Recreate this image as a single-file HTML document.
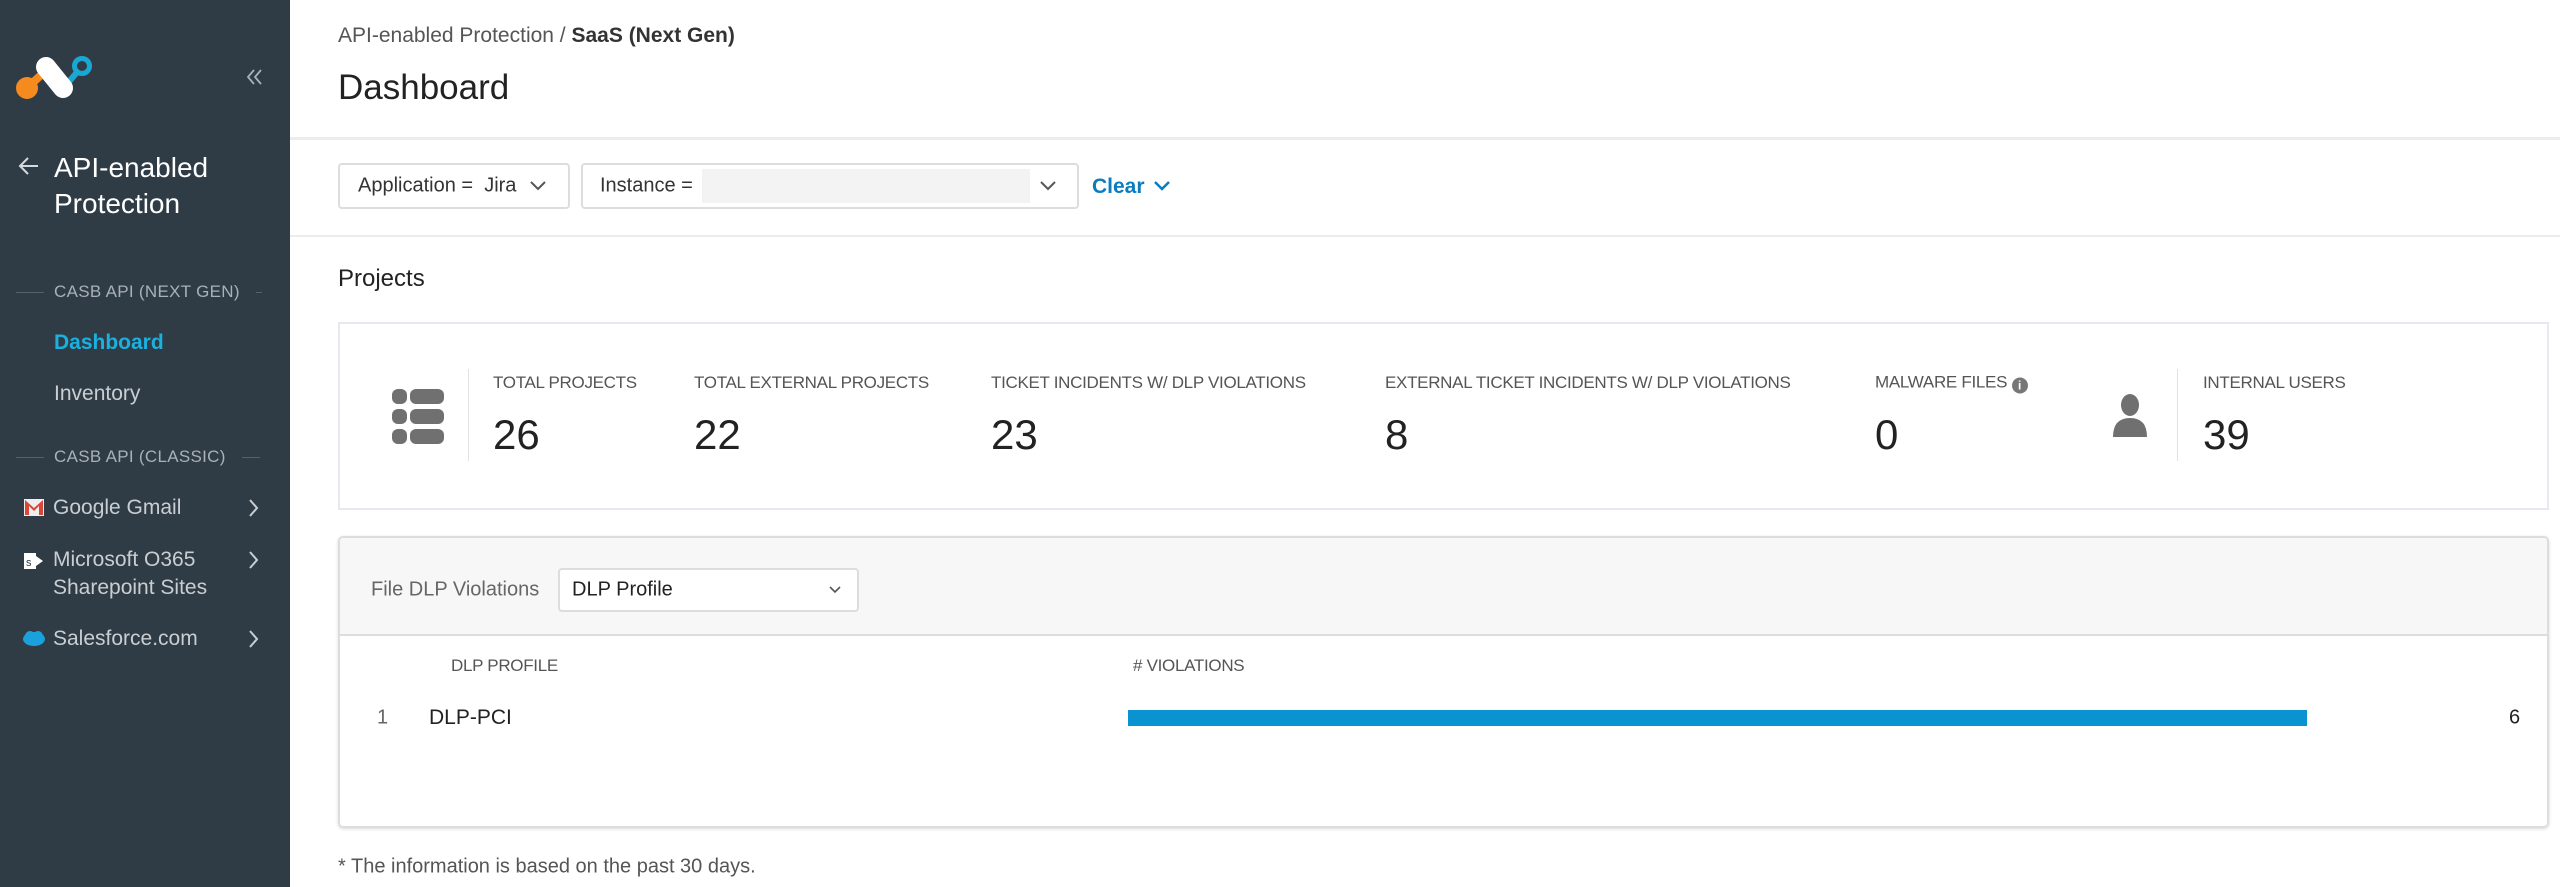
<!DOCTYPE html>
<html><head><meta charset="utf-8"><style>
*{margin:0;padding:0;box-sizing:border-box}
body{width:2560px;height:887px;background:#fff;font-family:"Liberation Sans",sans-serif;position:relative;overflow:hidden;color:#222}
.a{position:absolute;white-space:nowrap}
.c{transform:translateY(-50%)}
#sb{position:absolute;left:0;top:0;width:290px;height:887px;background:#2f3c46}
.sec{color:#a9b0b6;font-size:17px;letter-spacing:.3px}
.nav{color:#c9ced2;font-size:21px}
.lbl{color:#555;font-size:17px;letter-spacing:-.3px}
.val{color:#222;font-size:42px}
</style></head><body>
<div id="sb">
<svg class="a" style="left:15px;top:52px" width="80" height="56" viewBox="15 52 80 56">
<path d="M27 88 L40 76" stroke="#f58a1f" stroke-width="8" stroke-linecap="round"/>
<circle cx="27" cy="88" r="11" fill="#f58a1f"/>
<path d="M67 84 L79 70" stroke="#1aa7d3" stroke-width="6"/>
<circle cx="82" cy="66" r="7.5" fill="none" stroke="#1aa7d3" stroke-width="5"/>
<path d="M46 67 L63 88" stroke="#fff" stroke-width="20" stroke-linecap="round"/>
</svg>
<svg class="a" style="left:246px;top:68px" width="18" height="18"><path d="M8 2 L2 9 L8 16 M15 2 L9 9 L15 16" fill="none" stroke="#aab1b7" stroke-width="1.8"/></svg>
<svg class="a" style="left:18px;top:155px" width="22" height="22"><path d="M20 11 H3 M10 3 L2 11 L10 19" fill="none" stroke="#d5d9dc" stroke-width="2"/></svg>
<div class="a" style="left:54px;top:150px;color:#fff;font-size:28px;line-height:36px">API-enabled<br>Protection</div>
<div class="a" style="left:16px;top:292px;width:28px;height:1px;background:#56626b"></div>
<div class="a c sec" style="left:54px;top:292px">CASB API (NEXT GEN)</div>
<div class="a" style="left:256px;top:292px;width:6px;height:1px;background:#56626b"></div>
<div class="a c" style="left:54px;top:343px;color:#1ab0e0;font-size:21px;font-weight:bold">Dashboard</div>
<div class="a c nav" style="left:54px;top:394px">Inventory</div>
<div class="a" style="left:16px;top:457px;width:28px;height:1px;background:#56626b"></div>
<div class="a c sec" style="left:54px;top:457px">CASB API (CLASSIC)</div>
<div class="a" style="left:242px;top:457px;width:18px;height:1px;background:#56626b"></div>
<svg class="a" style="left:24px;top:499px" width="20" height="17"><rect width="20" height="17" fill="#eee"/><path d="M1 1 L10 9 L19 1 V16 H15 V7 L10 12 L5 7 V16 H1Z" fill="#d9473b"/></svg>
<div class="a c nav" style="left:53px;top:508px">Google Gmail</div>
<svg class="a" style="left:248px;top:498px" width="12" height="20"><path d="M2 2 L9 10 L2 18" fill="none" stroke="#c9ced2" stroke-width="2"/></svg>
<svg class="a" style="left:23px;top:551px" width="22" height="20"><rect x="1" y="2" width="12" height="16" fill="#fff"/><path d="M13 5 L20 10 L13 15Z" fill="#fff"/><text x="3" y="15" font-size="11" fill="#2f3c46" font-family="Liberation Sans">s</text></svg>
<div class="a nav" style="left:53px;top:546px;line-height:28px">Microsoft O365<br>Sharepoint Sites</div>
<svg class="a" style="left:248px;top:550px" width="12" height="20"><path d="M2 2 L9 10 L2 18" fill="none" stroke="#c9ced2" stroke-width="2"/></svg>
<svg class="a" style="left:23px;top:630px" width="23" height="18"><ellipse cx="11" cy="9" rx="11" ry="7" fill="#1aa0db"/><circle cx="7" cy="6" r="5" fill="#1aa0db"/><circle cx="15" cy="6" r="5" fill="#1aa0db"/></svg>
<div class="a c nav" style="left:53px;top:639px">Salesforce.com</div>
<svg class="a" style="left:248px;top:629px" width="12" height="20"><path d="M2 2 L9 10 L2 18" fill="none" stroke="#c9ced2" stroke-width="2"/></svg>
</div>

<div class="a c" style="left:338px;top:36px;font-size:21px;color:#555">API-enabled Protection / <span style="color:#333;font-weight:bold">SaaS (Next Gen)</span></div>
<div class="a c" style="left:338px;top:88px;font-size:35px;color:#222">Dashboard</div>
<div class="a" style="left:290px;top:137px;width:2270px;height:3px;background:#ececec"></div>

<div class="a" style="left:338px;top:163px;width:232px;height:46px;border:2px solid #ddd;border-radius:4px"></div>
<div class="a c" style="left:358px;top:186px;font-size:20px;color:#333">Application = &nbsp;Jira</div>
<svg class="a" style="left:529px;top:180px" width="18" height="12"><path d="M2 2 L9 9 L16 2" fill="none" stroke="#555" stroke-width="2"/></svg>
<div class="a" style="left:581px;top:163px;width:498px;height:46px;border:2px solid #ddd;border-radius:4px"></div>
<div class="a c" style="left:600px;top:186px;font-size:20px;color:#333">Instance =</div>
<div class="a" style="left:702px;top:169px;width:328px;height:34px;background:#f3f3f3"></div>
<svg class="a" style="left:1039px;top:180px" width="18" height="12"><path d="M2 2 L9 9 L16 2" fill="none" stroke="#555" stroke-width="2"/></svg>
<div class="a c" style="left:1092px;top:187px;font-size:21px;color:#0a7dc0;font-weight:bold">Clear</div>
<svg class="a" style="left:1153px;top:180px" width="18" height="12"><path d="M2 2 L9 9 L16 2" fill="none" stroke="#0a7dc0" stroke-width="2.5"/></svg>
<div class="a" style="left:290px;top:235px;width:2270px;height:2px;background:#ececec"></div>

<div class="a c" style="left:338px;top:279px;font-size:24px;color:#222">Projects</div>

<div class="a" style="left:338px;top:322px;width:2211px;height:188px;border:2px solid #e8e8ee"></div>
<svg class="a" style="left:392px;top:389px" width="52" height="55"><g fill="#707070"><rect x="0" y="0" width="15" height="15" rx="6"/><rect x="18" y="0" width="34" height="15" rx="6"/><rect x="0" y="20" width="15" height="15" rx="6"/><rect x="18" y="20" width="34" height="15" rx="6"/><rect x="0" y="40" width="15" height="15" rx="6"/><rect x="18" y="40" width="34" height="15" rx="6"/></g></svg>
<div class="a" style="left:468px;top:369px;width:1px;height:92px;background:#e2e2e2"></div>
<div class="a c lbl" style="left:493px;top:383px">TOTAL PROJECTS</div><div class="a c val" style="left:493px;top:435px">26</div>
<div class="a c lbl" style="left:694px;top:383px">TOTAL EXTERNAL PROJECTS</div><div class="a c val" style="left:694px;top:435px">22</div>
<div class="a c lbl" style="left:991px;top:383px">TICKET INCIDENTS W/ DLP VIOLATIONS</div><div class="a c val" style="left:991px;top:435px">23</div>
<div class="a c lbl" style="left:1385px;top:383px">EXTERNAL TICKET INCIDENTS W/ DLP VIOLATIONS</div><div class="a c val" style="left:1385px;top:435px">8</div>
<div class="a c lbl" style="left:1875px;top:383px">MALWARE FILES <span style="display:inline-block;width:16px;height:16px;border-radius:50%;background:#777;color:#fff;font-size:12px;text-align:center;line-height:16px;font-weight:bold;vertical-align:-2px">i</span></div><div class="a c val" style="left:1875px;top:435px">0</div>
<svg class="a" style="left:2110px;top:394px" width="40" height="44"><ellipse cx="20" cy="11" rx="9" ry="11" fill="#707070"/><path d="M3 43 Q3 24 20 24 Q37 24 37 43Z" fill="#707070"/></svg>
<div class="a" style="left:2177px;top:369px;width:1px;height:92px;background:#e2e2e2"></div>
<div class="a c lbl" style="left:2203px;top:383px">INTERNAL USERS</div><div class="a c val" style="left:2203px;top:435px">39</div>

<div class="a" style="left:338px;top:536px;width:2211px;height:292px;border:2px solid #ddd;border-radius:5px;overflow:hidden;box-shadow:0 1px 3px rgba(0,0,0,.15)">
<div style="height:98px;background:#f7f7f7;border-bottom:2px solid #ddd"></div></div>
<div class="a c" style="left:371px;top:590px;font-size:20px;color:#666">File DLP Violations</div>
<div class="a" style="left:558px;top:568px;width:301px;height:44px;border:2px solid #ddd;border-radius:4px;background:#fff"></div>
<div class="a c" style="left:572px;top:590px;font-size:20px;color:#222">DLP Profile</div>
<svg class="a" style="left:828px;top:585px" width="14" height="10"><path d="M2 2 L7 7 L12 2" fill="none" stroke="#555" stroke-width="1.6"/></svg>
<div class="a c" style="left:451px;top:666px;font-size:17px;color:#555;letter-spacing:-.3px">DLP PROFILE</div>
<div class="a c" style="left:1133px;top:666px;font-size:17px;color:#555;letter-spacing:-.3px"># VIOLATIONS</div>
<div class="a c" style="left:377px;top:718px;font-size:20px;color:#666">1</div>
<div class="a c" style="left:429px;top:718px;font-size:21px;color:#222">DLP-PCI</div>
<div class="a" style="left:1128px;top:710px;width:1179px;height:16px;background:#0a93d0"></div>
<div class="a c" style="left:2509px;top:718px;font-size:20px;color:#222">6</div>
<div class="a c" style="left:338px;top:867px;font-size:20px;color:#555">* The information is based on the past 30 days.</div>
</body></html>
